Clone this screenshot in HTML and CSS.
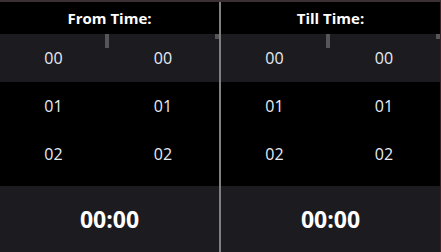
FILE: index.html
```html
<!DOCTYPE html>
<html lang="en">

<head>
    <meta charset="UTF-8">
    <meta name="viewport" content="width=device-width, initial-scale=1.0">
    <title>Time Range</title>
    <link rel="stylesheet" href="styles.css">
</head>

<body>
    <div class="picker">
        <section class="panel">
            <header class="panel-head">From Time:</header>
            <div class="wheel">
                <div class="col col-hours">
                    <div class="item selected">00</div>
                    <div class="item">01</div>
                    <div class="item">02</div>
                    <span class="thumb thumb-hours"></span>
                </div>
                <div class="col col-minutes">
                    <div class="item selected">00</div>
                    <div class="item">01</div>
                    <div class="item">02</div>
                    <span class="thumb thumb-minutes"></span>
                </div>
            </div>
            <div class="result">00:00</div>
        </section>

        <div class="divider"></div>

        <section class="panel panel-last">
            <header class="panel-head">Till Time:</header>
            <div class="wheel">
                <div class="col col-hours">
                    <div class="item selected">00</div>
                    <div class="item">01</div>
                    <div class="item">02</div>
                    <span class="thumb thumb-hours"></span>
                </div>
                <div class="col col-minutes">
                    <div class="item selected">00</div>
                    <div class="item">01</div>
                    <div class="item">02</div>
                    <span class="thumb thumb-minutes"></span>
                </div>
            </div>
            <div class="result">00:00</div>
        </section>
    </div>
</body>

</html>
```

FILE: styles.css
```css
body {
    margin: 0;
    background: #000;
    overflow: hidden;
    font-family: 'Open Sans', 'Noto Sans', sans-serif;
}

.picker {
    display: flex;
    height: 250px;
    border-top: 2px solid #3b3034;
}

.panel {
    width: 219px;
    display: flex;
    flex-direction: column;
}

.panel-last {
    border-right: 1px solid #3a2329;
}

.divider {
    width: 2px;
    background: #808080;
}

.panel-head {
    height: 32px;
    display: flex;
    align-items: center;
    justify-content: center;
    color: #fff;
    font-weight: 700;
    font-size: 15px;
}

.wheel {
    display: flex;
    height: 152px;
    overflow: hidden;
}

.col {
    position: relative;
    width: 109px;
}

.col-minutes {
    width: 110px;
}

.item {
    height: 48px;
    display: flex;
    align-items: center;
    justify-content: center;
    padding-right: 2px;
    color: #e6ecf5;
    font-size: 16px;
}

.item.selected {
    background: #1c1b20;
}

/* scrollbar thumb, sits over the list */
.thumb {
    position: absolute;
    top: 0;
    right: 0;
    width: 4px;
    background: #565558;
}

.thumb-hours {
    height: 14px;
}

.thumb-minutes {
    height: 5px;
}

.result {
    flex: 1;
    display: flex;
    align-items: center;
    justify-content: center;
    background: #1c1b20;
    color: #fff;
    font-weight: 700;
    font-size: 23px;
}
```
